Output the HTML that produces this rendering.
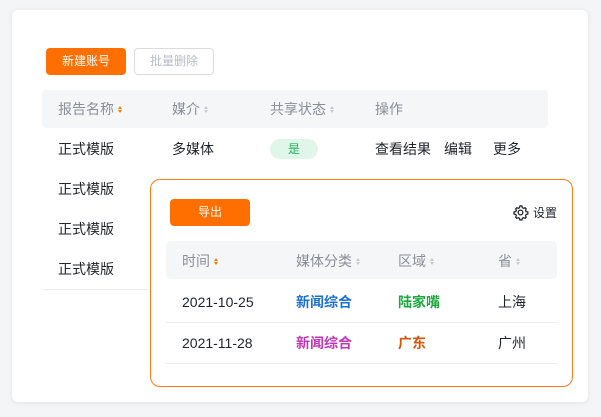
<!DOCTYPE html>
<html><head><meta charset="utf-8"><style>
*{margin:0;padding:0;box-sizing:border-box}
body{width:601px;height:417px;background:#f4f5f7;font-family:"Liberation Sans","Noto Sans CJK SC",sans-serif;position:relative;overflow:hidden;font-size:14px;color:#1f2329}
.abs{position:absolute}
.card{left:12px;top:10px;width:576px;height:392px;background:#fff;border-radius:6px;box-shadow:0 1px 6px rgba(0,0,0,.08)}
.btn{border-radius:4px;font-size:12px;text-align:center;line-height:27px;height:27px}
.t{position:absolute;line-height:20px;white-space:nowrap}
.hd{color:#8a8f99}
.s{display:inline-block;width:5px;vertical-align:middle;margin-left:4px;position:relative;top:-1px}
.s i{display:block;width:0;height:0;border-left:2.5px solid transparent;border-right:2.5px solid transparent}
.s i.u{border-bottom:3px solid #c5c8ce;margin-bottom:1px}
.s i.d{border-top:3px solid #c5c8ce}
.s.o i.u{border-bottom-color:#ff7a00}.s.o i.d{border-top-color:#ff7a00}
</style></head><body>
<div class="abs card"></div>
<div class="abs btn" style="left:46px;top:48px;width:80px;background:#ff6f00;color:#fff">新建账号</div>
<div class="abs btn" style="left:134px;top:48px;width:80px;border:1px solid #d9dbe0;color:#b8bcc4;line-height:25px">批量删除</div>
<div class="abs" style="left:42px;top:90px;width:506px;height:38px;background:#f5f6f8;border-radius:4px"></div>
<div class="t hd" style="left:58px;top:99px">报告名称<span class="s o"><i class="u"></i><i class="d"></i></span></div>
<div class="t hd" style="left:172px;top:99px">媒介<span class="s"><i class="u"></i><i class="d"></i></span></div>
<div class="t hd" style="left:270px;top:99px">共享状态<span class="s"><i class="u"></i><i class="d"></i></span></div>
<div class="t hd" style="left:375px;top:99px">操作</div>
<div class="t" style="left:58px;top:139px">正式模版</div>
<div class="t" style="left:172px;top:139px">多媒体</div>
<div class="abs" style="left:270px;top:139px;width:48px;height:20px;border-radius:10px;background:#dff6e8;color:#20b45a;font-size:12px;text-align:center;line-height:20px">是</div>
<div class="t" style="left:375px;top:139px">查看结果</div>
<div class="t" style="left:444px;top:139px">编辑</div>
<div class="t" style="left:493px;top:139px">更多</div>
<div class="t" style="left:58px;top:179px">正式模版</div>
<div class="t" style="left:58px;top:219px">正式模版</div>
<div class="t" style="left:58px;top:259px">正式模版</div>
<div class="abs" style="left:42px;top:289px;width:110px;height:1px;background:#eceef1"></div>

<div class="abs" style="left:150px;top:179px;width:423px;height:208px;border:1px solid #ff7a1a;border-radius:10px;background:#fff"></div>
<div class="abs btn" style="left:170px;top:199px;width:80px;background:#ff6f00;color:#fff">导出</div>
<svg class="abs" style="left:512px;top:204px" width="17" height="17" viewBox="0 0 24 24" fill="none" stroke="#1f2329" stroke-width="1.8"><path d="M12 2.5l2 .3.6 2.4 1.6.9 2.3-.8 1.4 1.5-.8 2.3.9 1.6 2.4.6v2.8l-2.4.6-.9 1.6.8 2.3-1.4 1.5-2.3-.8-1.6.9-.6 2.4h-2.8l-.6-2.4-1.6-.9-2.3.8-1.4-1.5.8-2.3-.9-1.6-2.4-.6v-2.8l2.4-.6.9-1.6-.8-2.3 1.4-1.5 2.3.8 1.6-.9.6-2.4z"/><circle cx="12" cy="12" r="3.3"/></svg>
<div class="t" style="left:533px;top:203px;font-size:12px">设置</div>
<div class="abs" style="left:166px;top:241px;width:391px;height:38px;background:#f5f6f8;border-radius:5px"></div>
<div class="t hd" style="left:182px;top:251px">时间<span class="s o"><i class="u"></i><i class="d"></i></span></div>
<div class="t hd" style="left:296px;top:251px">媒体分类<span class="s"><i class="u"></i><i class="d"></i></span></div>
<div class="t hd" style="left:398px;top:251px">区域<span class="s"><i class="u"></i><i class="d"></i></span></div>
<div class="t hd" style="left:498px;top:251px">省<span class="s"><i class="u"></i><i class="d"></i></span></div>
<div class="t" style="left:182px;top:292px">2021-10-25</div>
<div class="t" style="left:296px;top:292px;color:#1a6fd0;font-weight:bold">新闻综合</div>
<div class="t" style="left:398px;top:292px;color:#1aaa3c;font-weight:bold">陆家嘴</div>
<div class="t" style="left:498px;top:292px">上海</div>
<div class="abs" style="left:166px;top:322px;width:391px;height:1px;background:#eceef1"></div>
<div class="t" style="left:182px;top:333px">2021-11-28</div>
<div class="t" style="left:296px;top:333px;color:#c234b8;font-weight:bold">新闻综合</div>
<div class="t" style="left:398px;top:333px;color:#d4560a;font-weight:bold">广东</div>
<div class="t" style="left:498px;top:333px">广州</div>
<div class="abs" style="left:166px;top:363px;width:391px;height:1px;background:#eceef1"></div>
</body></html>
